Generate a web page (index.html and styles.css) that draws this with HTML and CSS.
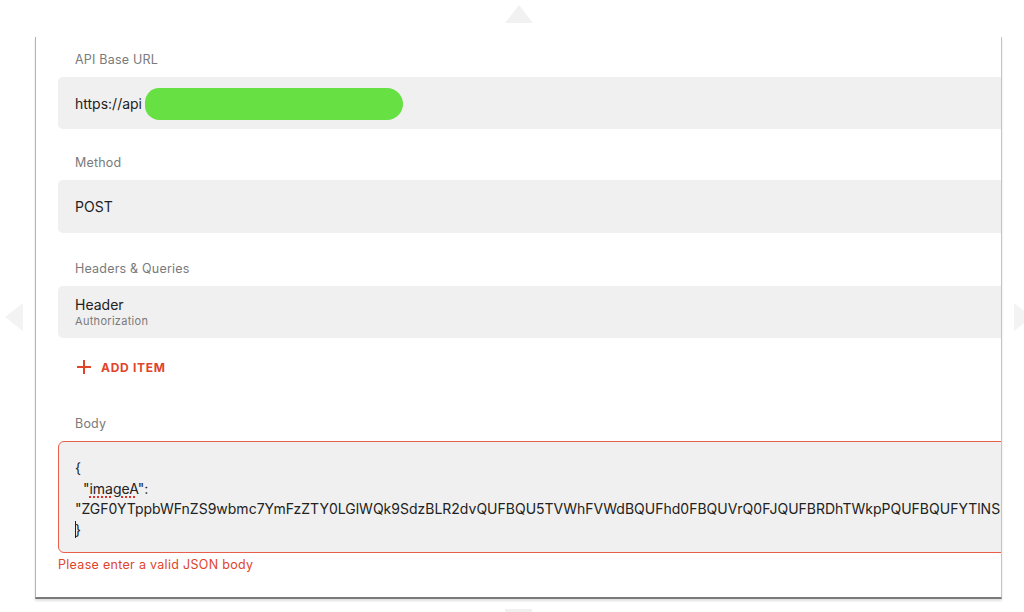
FILE: index.html
```html
<!DOCTYPE html>
<html>
<head>
<meta charset="utf-8">
<link rel="stylesheet" href="styles.css">
</head>
<body>
<div class="stage">
  <div class="nav nav-up"></div>
  <div class="nav nav-left"></div>
  <div class="nav nav-right"></div>
  <div class="nav nav-down"></div>

  <div class="card">
    <div class="label first">API Base URL</div>
    <div class="field">
      <span class="value">https://api</span>
      <span class="redact"></span>
    </div>

    <div class="label">Method</div>
    <div class="field tall">
      <span class="value">POST</span>
    </div>

    <div class="label headers-label">Headers &amp; Queries</div>
    <div class="field item">
      <span class="item-title">Header</span>
      <span class="item-sub">Authorization</span>
    </div>

    <div class="add-item">
      <svg class="plus" width="14" height="14" viewBox="0 0 14 14"><path d="M7 0V14M0 7H14" stroke="#e0452b" stroke-width="2"/></svg>
      <span>ADD ITEM</span>
    </div>

    <div class="label body-label">Body</div>
    <div class="textarea">
      <div class="code">{
  "<span class="spell">imageA</span>":
"ZGF0YTppbWFnZS9wbmc7YmFzZTY0LGlWQk9SdzBLR2dvQUFBQU5TVWhFVWdBQUFhd0FBQUVrQ0FJQUFBRDhTWkpPQUFBQUFYTlNSMElBcnM0YzZRQUFBQVJu"
<span class="caret"></span>}</div>
    </div>
    <div class="error">Please enter a valid JSON body</div>
  </div>
</div>
</body>
</html>
```

FILE: styles.css
```css
* { box-sizing: border-box; }
html, body { margin: 0; padding: 0; background: #fff; }
body {
  font-family: "Inter", "Liberation Sans", sans-serif;
  color: #222;
  width: 1024px;
  height: 612px;
  overflow: hidden;
}
.stage {
  position: relative;
  width: 1024px;
  height: 612px;
  padding-top: 37px;
}
.nav { position: absolute; width: 0; height: 0; }
.nav-up {
  left: 505px; top: 5px;
  border-left: 14px solid transparent;
  border-right: 14px solid transparent;
  border-bottom: 18px solid #f1f1f1;
}
.nav-left {
  left: 5px; top: 303px;
  border-top: 14px solid transparent;
  border-bottom: 14px solid transparent;
  border-right: 18px solid #f3f3f3;
}
.nav-right {
  left: 1014px; top: 303px;
  border-top: 14px solid transparent;
  border-bottom: 14px solid transparent;
  border-left: 18px solid #f3f3f3;
}
.nav-down {
  left: 505px; top: 609px;
  width: 27px; height: 3px;
  background: #f0f0f0;
}
.card {
  margin-left: 35px;
  width: 967px;
  height: 562px;
  background: #fff;
  border-left: 1px solid #b3b3b3;
  border-right: 1px solid #c4c4c4;
  border-bottom: 2px solid #7a7a7a;
  box-shadow: 0 2px 2px rgba(0,0,0,0.12);
  padding: 14px 0 0 22px;
  overflow: hidden;
}
.label {
  font-size: 12.5px;
  line-height: 16px;
  color: #7a7a7a;
  padding: 1px 0 0 17px;
  margin: 25px 0 9px;
  letter-spacing: 0.2px;
}
.label.first { margin-top: 0; }
.label.headers-label { margin-top: 27px; }
.field {
  position: relative;
  width: 1000px;
  height: 52px;
  background: #f0f0f0;
  border-radius: 5px;
  display: flex;
  align-items: center;
  padding-left: 17px;
}
.field.tall { height: 53px; }
.value { font-size: 14px; color: #222; }
.redact {
  position: absolute;
  left: 87px; top: 11px;
  width: 258px; height: 32px;
  background: #67e044;
  border-radius: 16px 18px 18px 16px;
}
.item {
  flex-direction: column;
  align-items: flex-start;
  justify-content: center;
}
.item-title { font-size: 14px; line-height: 18px; color: #222; }
.item-sub { font-size: 11px; line-height: 14px; color: #7a7a7a; letter-spacing: 0.3px; }
.add-item {
  display: flex;
  align-items: center;
  height: 30px;
  margin-top: 14px;
  padding-left: 19px;
  gap: 10px;
  color: #e0452b;
  font-weight: 700;
  font-size: 12px;
  letter-spacing: 0.7px;
}
.body-label { margin-top: 33px; }
.textarea {
  width: 1000px;
  height: 112px;
  background: #f0f0f0;
  border: 1px solid #e8604c;
  border-radius: 6px;
  padding: 16px 0 0 16px;
  overflow: hidden;
}
.code {
  white-space: pre;
  font-size: 14px;
  line-height: 20.5px;
  color: #222;
}
.spell {
  text-decoration: underline dotted #e0302a;
  text-decoration-thickness: 2px;
  text-underline-offset: 3px;
}
.caret {
  display: inline-block;
  width: 1px;
  height: 17px;
  background: #222;
  vertical-align: -3px;
  margin-right: -1px;
}
.error {
  margin-top: 4px;
  font-size: 12.5px;
  line-height: 16px;
  color: #e0452b;
  letter-spacing: 0.3px;
}
```
